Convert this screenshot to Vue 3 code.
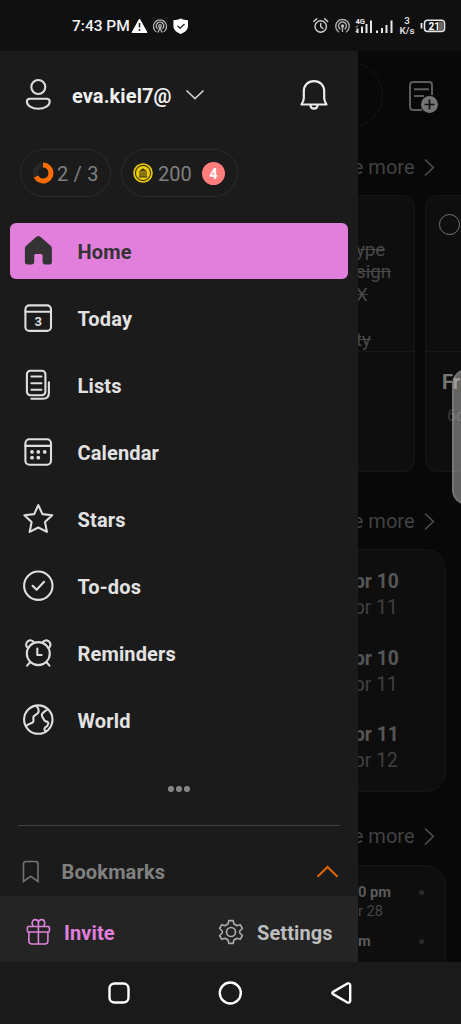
<script setup>
const items = [
  { id: 'home', label: 'Home' },
  { id: 'today', label: 'Today' },
  { id: 'lists', label: 'Lists' },
  { id: 'calendar', label: 'Calendar' },
  { id: 'stars', label: 'Stars' },
  { id: 'todos', label: 'To-dos' },
  { id: 'reminders', label: 'Reminders' },
  { id: 'world', label: 'World' },
]
const dates = [
  ['pr 10', 'pr 11'],
  ['pr 10', 'pr 11'],
  ['pr 11', 'pr 12'],
]
</script>

<template>
  <div class="screen">
    <header class="status">
      <span class="clock">7:43 PM</span>
      <svg class="st-left" width="60" height="18" viewBox="0 0 60 18">
        <path d="M8.500 2 L16 15.500 H1 Z" fill="#fff" stroke="#fff" stroke-linejoin="round" />
        <path d="M8.500 6v4.500M8.500 12v1.700" stroke="#222" stroke-width="1.600" />
        <g fill="none" stroke="#b5b5b5" stroke-width="1.300">
          <path d="M25.400 15a6.600 6.600 0 1 1 7.200 0M26.600 11.800a3.800 3.800 0 1 1 4.800 0M27 15.500l2-5 2 5" />
          <circle cx="29" cy="9" r="1.400" />
        </g>
        <path d="M49.700 1.500c2.300 1.300 4.700 1.700 7.300 1.700v5.500c0 4-3 6.500-7.300 8.300-4.300-1.800-7.300-4.300-7.300-8.300V3.200c2.600 0 5-.4 7.300-1.700Z" fill="#fff" />
        <path d="m46.500 8.800 2.600 2.500 4.400-4.400" fill="none" stroke="#333" stroke-width="1.400" />
      </svg>
      <svg class="st-right" width="92" height="18" viewBox="0 0 92 18">
        <g fill="none" stroke="#cfcfcf" stroke-width="1.400" stroke-linecap="round">
          <circle cx="7.700" cy="9.500" r="5.700" />
          <path d="M.8 4.400 3.800 1.800M11.600 1.800l3 2.600M7.700 6.500v3.200l2.200 1.800" />
          <path d="M25.500 14.800a6.800 6.800 0 1 1 8 0M27 11.900a3.900 3.900 0 1 1 5 0" stroke="#aaa" />
        </g>
        <circle cx="29.500" cy="9" r="1.700" fill="#bbb" />
        <path d="M29.500 10v5" stroke="#aaa" stroke-width="1.500" />
        <path d="M46 16v-4.500M50.500 16v-6.500M55 16V7M59.500 16V3.500M65.500 16v-2.500M70.500 16v-5M75 16V8M80 16V3.500" transform="translate(-1.500 0)" stroke="#e8e8e8" stroke-width="2" />
        <path d="M42.500 14.500h2M43 10.500l2-2" stroke="#ccc" />
        <text x="42.500" y="6.500" class="g4">4G</text>
      </svg>
      <span class="speed">3<br />K/s</span>
      <svg class="battery" width="26" height="14" viewBox="0 0 26 14">
        <path d="M1.500 4v5.500" stroke="#eee" stroke-width="1.800" />
        <rect x="4.500" y="1.200" width="20" height="11.200" rx="3" fill="none" stroke="#e6e6e6" stroke-width="1.600" />
        <rect x="19" y="2.500" width="4.500" height="8.600" fill="#666" />
        <text x="8.500" y="10.500" class="pct">21</text>
      </svg>
    </header>

    <main class="body">
      <aside class="drawer">
        <div class="account">
          <svg width="30" height="34" viewBox="0 0 30 34" fill="none" stroke="#dcdcdc" stroke-width="2.100">
            <circle cx="15.300" cy="9" r="7" />
            <path d="M7 20.800h16.600c2 0 3.100 1 3.100 2.700 0 4.200-4.800 7.200-11.400 7.200S3.900 27.700 3.900 23.500c0-1.700 1.100-2.700 3.100-2.700Z" />
          </svg>
          <strong>eva.kiel7@</strong>
          <svg class="chev" width="20" height="12" viewBox="0 0 20 12" fill="none" stroke="#d0d0d0" stroke-width="1.700"><path d="m1.500 1.500 8.500 8 8.500-8" /></svg>
          <svg class="bell" width="30" height="32" viewBox="0 0 30 32" fill="none" stroke="#ececec" stroke-width="2.200" stroke-linejoin="round">
            <path d="M15 2.200C8.800 2.200 4.800 6.500 4.800 12.300V19c0 2.500-1 4.500-2.300 6.500h25c-1.300-2-2.300-4-2.300-6.500v-6.700c0-5.800-4-10.100-10.200-10.100Z" />
            <path d="M11.500 26c0 2.400 1.300 3.600 3.500 3.600s3.500-1.200 3.500-3.600" />
          </svg>
        </div>

        <div class="pills">
          <div class="pill goal">
            <svg width="22" height="22" viewBox="0 0 22 22" fill="none" stroke-width="5">
              <circle cx="11" cy="11" r="7.900" stroke="#272727" />
              <path d="M11 3.100a7.900 7.900 0 1 1-7 11.500" stroke="#fb6d04" />
            </svg>
            <span>2 / 3</span>
          </div>
          <div class="pill coins">
            <svg width="20" height="20" viewBox="0 0 20 20">
              <circle cx="10" cy="10" r="9.800" fill="#edcc0a" />
              <circle cx="10" cy="10" r="7.600" fill="none" stroke="#443c10" stroke-width="1.200" />
              <path d="M5.800 8.300 10 5.300l4.200 3Z" fill="#443c10" />
              <path d="M7 8.500v5M9 8.500v5M11 8.500v5M13 8.500v5M5.700 14h8.600" stroke="#443c10" stroke-width="1.200" />
            </svg>
            <span>200</span>
            <b>4</b>
          </div>
        </div>

        <nav class="menu">
          <a v-for="item in items" :key="item.id" :class="{ active: item.id === 'home' }">
            <svg width="32" height="32" viewBox="0 0 32 32" fill="none" stroke="#dedede" stroke-width="2.100" stroke-linecap="round" stroke-linejoin="round">
              <path v-if="item.id === 'home'" d="M3.500 11.500 14 2.300q2-1.600 4 0l10.500 9.200q1 .9 1 2.400v13.600q0 2.500-2.500 2.500h-4.500q-2.300 0-2.300-2.300V21q0-1.500-1.500-1.500h-5.400q-1.500 0-1.500 1.500v6.700q0 2.300-2.300 2.300H5q-2.500 0-2.500-2.500V13.900q0-1.500 1-2.400Z" transform="translate(.4 -.6)" fill="#333" stroke="none" />
              <g v-else-if="item.id === 'today'" transform="translate(.4 .4)">
                <rect x="3" y="3" width="25.600" height="25.500" rx="4" />
                <path d="M3 9.300h25.600" />
                <text x="16" y="23.300" text-anchor="middle" class="day">3</text>
              </g>
              <g v-else-if="item.id === 'lists'" transform="translate(.4 .8)">
                <rect x="4.500" y="1" width="18.500" height="24.500" rx="3.500" />
                <path d="M9 6.700h10M9 13.400h10M9 20h10M9 29H20.500q6 0 6-6V12.500" />
              </g>
              <g v-else-if="item.id === 'calendar'" transform="translate(.4 0)">
                <rect x="3" y="3.300" width="25.600" height="25.500" rx="4" />
                <path d="M3 9.900h25.600" />
                <g fill="#dedede" stroke="none">
                  <circle cx="9.600" cy="15.900" r="1.900" /><circle cx="15.900" cy="15.900" r="1.900" /><circle cx="22.300" cy="15.900" r="1.900" />
                  <circle cx="9.600" cy="21.700" r="1.900" /><circle cx="15.900" cy="21.700" r="1.900" />
                </g>
              </g>
              <path v-else-if="item.id === 'stars'" transform="translate(.3 -.2)" d="m16 2.300 4.100 9 9.800 1.200-7.200 6.700 1.900 9.900-8.600-4.400-8.600 4.400 1.900-9.900-7.200-6.700 9.800-1.200Z" />
              <g v-else-if="item.id === 'todos'" transform="translate(.3 -.2)">
                <circle cx="16" cy="15.900" r="14.200" />
                <path d="m10.300 16 4 4 7.500-8" />
              </g>
              <g v-else-if="item.id === 'reminders'" transform="translate(.3 0)">
                <circle cx="16" cy="16.600" r="11.500" />
                <path d="M4.600 9.800a4.100 4.100 0 1 1 6.900-4.600M27.400 9.800a4.100 4.100 0 1 0-6.900-4.600M7.800 25.200l-3 3.400M24.200 25.200l3 3.400M15 11.500V18h4.300" />
              </g>
              <g v-else transform="translate(.3 0)">
                <circle cx="16" cy="15.600" r="14.200" />
                <path d="M14 2c2.700 2.500 2.900 5.100 1.500 7.200-1.500 2.100-4.300 1.800-4.500 4.200-.1 2 .8 2.900-.2 4.500-1.300 2.100-4.300 1.200-6.700 4M25 5.500c-2.400 2.100-5.500 3.300-5.500 5.600 0 2.600 2 2.900 2.400 5.100.2 1.500 2.600.8 3.900 2.200.9 1-.3 2.300-.8 3.300-.7 1.400-2.300 1.200-2.800 2.900-.3 1 .5 2 1 3" />
              </g>
            </svg>
            <span>{{ item.label }}</span>
          </a>
        </nav>

        <div class="dots"><i /><i /><i /></div>

        <div class="bookmarks">
          <svg width="18" height="24" viewBox="0 0 18 24" fill="none" stroke="#737373" stroke-width="1.600"><path d="M1.500 21.500V4q0-2.500 2.500-2.500h9.500Q16 1.500 16 4v17.500l-7.200-5.200Z" /></svg>
          <strong>Bookmarks</strong>
          <svg class="up" width="24" height="14" viewBox="0 0 24 14" fill="none" stroke="#dc6507" stroke-width="2"><path d="M2.500 11.800 12.500 2l10 9.800" /></svg>
        </div>

        <div class="actions">
          <svg class="gift" width="26" height="28" viewBox="0 0 26 28" fill="none" stroke="#dd82db" stroke-width="1.600" stroke-linejoin="round">
            <rect x="2.400" y="8.500" width="22" height="5.500" rx="1" />
            <path d="M3.900 14v9q0 3 3 3h13q3 0 3-3v-9M13.400 8.500V26M13.400 8.500V5.200C13.400 3 12.100 1.600 10.300 1.600S7.100 3 7.100 5.200q0 2 1.300 3.300M13.400 5.200c0-2.200 1.300-3.600 3.100-3.600s3.200 1.400 3.200 3.600q0 2-1.300 3.300" />
          </svg>
          <strong class="invite">Invite</strong>
          <svg class="gear" width="28" height="28" viewBox="0 0 28 28" fill="none" stroke="#ababab" stroke-width="1.700" stroke-linejoin="round">
            <circle cx="14" cy="14" r="4.500" />
            <path transform="translate(.7 .7) scale(.95)" d="M11.700 2h4.600l.8 3.600q1.700.8 3.100 1.800l3.500-1.100 2.300 4-2.600 2.400q-.5 1.300 0 2.600l2.600 2.400-2.300 4-3.500-1.100q-1.400 1-3.100 1.800l-.8 3.600h-4.600l-.8-3.600q-1.700-.8-3.100-1.800l-3.500 1.100-2.300-4 2.600-2.400q.5-1.300 0-2.600L2 10.300l2.300-4 3.500 1.100q1.400-1 3.100-1.800Z" />
          </svg>
          <strong class="settings">Settings</strong>
        </div>
      </aside>

      <section class="page">
        <div class="top">
          <i class="avatar" />
          <svg width="32" height="34" viewBox="0 0 32 34" fill="none" stroke="#5c5c5c" stroke-width="2">
            <path d="M25 15V5q0-3-3-3H6Q3 2 3 5v22q0 3 3 3h9M7 9.300h15M7 16h10" />
            <circle cx="22.500" cy="24.500" r="8.500" fill="#757575" stroke="none" />
            <path d="M22.500 19.500v10M17.500 24.500h10" stroke="#111" stroke-width="1.700" />
          </svg>
        </div>
        <div class="more m1"><span>e more</span><svg width="11" height="19" viewBox="0 0 11 19"><path d="m1 1.500 8.300 8L1 17.500" /></svg></div>
        <div class="cards">
          <div class="card notes">
            <div class="lines"><s>ype</s><s>sign</s><s>X</s><s class="gap">ty</s></div>
          </div>
          <div class="card next">
            <div class="check"><i /></div>
            <strong>Fr</strong>
            <small>6d</small>
          </div>
        </div>
        <div class="more m2"><span>e more</span><svg width="11" height="19" viewBox="0 0 11 19"><path d="m1 1.500 8.300 8L1 17.500" /></svg></div>
        <div class="panel list">
          <div v-for="(d, i) in dates" :key="i" class="date"><b>{{ d[0] }}</b><span>{{ d[1] }}</span></div>
        </div>
        <div class="more m3"><span>e more</span><svg width="11" height="19" viewBox="0 0 11 19"><path d="m1 1.500 8.300 8L1 17.500" /></svg></div>
        <div class="panel events">
          <div class="ev"><b>0 pm</b><i /></div>
          <span>r 28</span>
          <div class="ev"><b>m</b><i /></div>
        </div>
        <div class="handle" />
      </section>
    </main>

    <footer class="sysnav">
      <svg width="24" height="24" viewBox="0 0 24 24"><rect x="2.500" y="2.500" width="19" height="19" rx="5" /></svg>
      <svg width="26" height="26" viewBox="0 0 26 26"><circle cx="13.300" cy="13" r="10.500" /></svg>
      <svg width="24" height="26" viewBox="0 0 24 26"><path d="M4.500 11.600 18 3.700q2.800-1.200 3.200 1.500v15.600q-.4 2.700-3.200 1.500L4.500 14.400q-2.500-1.400 0-2.800Z" /></svg>
    </footer>
  </div>
</template>

<style>
body { margin: 0; background: #080808; }
</style>

<style scoped>
* { box-sizing: border-box; }
.screen { width: 461px; height: 1024px; display: flex; flex-direction: column; overflow: hidden; background: #080808; font-family: Roboto, "Liberation Sans", sans-serif; }
svg { display: block; flex: none; }
i { display: block; }
span, strong, b, small, s { white-space: nowrap; }

.status { height: 51px; flex: none; display: flex; align-items: center; background: #101010; color: #f2f2f2; padding-left: 72px; }
.clock { font-size: 15.500px; font-weight: 500; line-height: 20px; width: 59px; }
.st-right { margin-left: 122px; }
.speed { width: 20px; margin-left: -8px; padding-top: 1px; font-size: 9.800px; line-height: 10px; text-align: center; font-weight: 600; color: #ddd; }
.battery { margin-left: 3px; }
.g4 { font: 700 7.500px Roboto, sans-serif; fill: #eee; }
.pct { font: 700 10px Roboto, sans-serif; fill: #fff; }

.body { height: 911px; flex: none; display: flex; }
.drawer { width: 358px; flex: none; background: #1b1b1b; display: flex; flex-direction: column; }
.account { height: 98px; flex: none; padding: 0 29px 10px 23px; display: flex; align-items: center; color: #f0f0f0; }
.account strong { margin-left: 19px; width: 100px; padding-top: 1px; font-size: 20px; font-weight: 700; line-height: 24px; letter-spacing: .1px; }
.chev { margin-left: 13px; }
.bell { margin-left: auto; }

.pills { height: 74px; flex: none; display: flex; align-items: flex-start; gap: 10px; padding-left: 20px; }
.pill { height: 48px; border: 1.500px solid #2b2b2b; border-radius: 24px; display: flex; align-items: center; color: #7f7f7f; font-size: 20px; line-height: 24px; }
.pill span { padding-top: 2px; }
.goal { width: 91px; padding-left: 11px; }
.goal span { margin-left: 3px; letter-spacing: .2px; }
.coins { width: 117px; padding-left: 11px; }
.coins span { margin-left: 5px; width: 35px; }
.coins b { width: 23px; height: 23px; margin-left: 9px; border-radius: 50%; background: #ff7d7d; color: #fff; font-size: 14px; line-height: 25px; text-align: center; }

.menu { display: flex; flex-direction: column; gap: 11px; padding: 0 10px; }
.menu a { height: 56px; border-radius: 6px; display: flex; align-items: center; padding-left: 12px; color: #e2e2e2; font-size: 20px; font-weight: 700; line-height: 24px; letter-spacing: .15px; }
.menu span { margin-left: 23.500px; padding-top: 2px; }
.menu .active { background: #e27fdd; color: #333; }
.day { font: 700 13px Roboto, sans-serif; fill: #dedede; stroke: none; }

.dots { height: 78px; flex: none; display: flex; gap: 2.300px; justify-content: center; align-items: center; border-bottom: 1.500px solid #404040; margin: 0 18px; padding-top: 5px; }
.dots i { width: 5.500px; height: 5.500px; border-radius: 50%; background: #858585; }
.bookmarks { flex: 1; display: flex; align-items: center; padding: 21px 19px 0 22px; color: #818181; font-size: 20px; line-height: 24px; letter-spacing: .15px; }
.bookmarks strong { margin-left: 21.500px; }
.up { margin-left: auto; }
.actions { height: 66px; flex: none; background: #242424; display: flex; align-items: center; padding: 6px 0 0 25px; font-size: 20px; line-height: 24px; letter-spacing: .1px; }
.actions strong { padding-top: 2px; }
.invite { margin-left: 13px; width: 52px; color: #e07fdc; }
.gear { margin-left: 101px; }
.settings { margin-left: 12px; color: #bdbdbd; }

.page { position: relative; flex: 1; min-width: 0; overflow: hidden; background: #080808; display: flex; flex-direction: column; color: #454545; }
.top { height: 88px; flex: none; display: flex; align-items: center; }
.avatar { width: 66px; height: 66px; flex: none; margin-left: -41px; border: 1px solid #151515; border-radius: 50%; }
.top svg { margin: 4px 0 0 24px; }
.more { flex: none; height: 24px; display: flex; align-items: center; color: #424242; font-size: 20px; line-height: 24px; }
.more span { width: 56.500px; display: flex; justify-content: flex-end; }
.more svg { margin-left: 9px; fill: none; stroke: #4c4c4c; stroke-width: 1.700; }
.m1 { margin-top: 16px; }
.m2 { margin-top: 37px; }
.m3 { margin-top: 32px; }
.cards { display: flex; flex: none; gap: 10px; height: 277px; margin-top: 16px; }
.card { background: #0e0e0e; border: 1px solid #161616; flex: none; overflow: hidden; }
.notes { width: 57px; border-left: 0; border-radius: 0 12px 12px 0; }
.lines { height: 156px; padding-top: 43px; border-bottom: 1px solid #171717; display: flex; flex-direction: column; font-size: 18.700px; line-height: 22.400px; color: #484848; }
.lines s { margin-left: -2px; }
.lines .gap { margin-top: 22.400px; }
.next { width: 70px; border-radius: 12px; }
.check { height: 156px; border-bottom: 1px solid #171717; padding: 18px 0 0 13px; }
.check i { width: 21px; height: 21px; border: 1.800px solid #777; border-radius: 50%; }
.next strong { display: block; margin: 18px 0 0 16px; font-size: 20px; line-height: 24px; color: #777; }
.next small { display: block; margin: 12px 0 0 21px; font-size: 16px; line-height: 20px; color: #393939; }
.panel { flex: none; width: 88px; background: #0e0e0e; border: 1px solid #151515; border-left: 0; }
.list { height: 243px; margin-top: 16px; border-radius: 0 20px 20px 0; padding-top: 19px; }
.date { height: 76.700px; margin-left: -4px; display: flex; flex-direction: column; font-size: 19.300px; line-height: 26px; color: #404040; }
.date b { color: #565656; }
.events { height: 100px; margin-top: 17px; border-radius: 0 20px 0 0; padding-top: 16px; font-size: 14.700px; line-height: 20px; }
.ev { display: flex; align-items: center; width: 66px; justify-content: space-between; }
.ev b { color: #5a5a5a; }
.ev i { width: 5px; height: 5px; border-radius: 50%; background: #292929; }
.events > span { display: block; height: 29px; line-height: 18px; margin-left: 0; }
.handle { position: absolute; left: 94px; top: 318px; width: 30px; height: 136px; border-radius: 15px; background: rgba(200, 200, 200, .46); border: 2px solid rgba(160, 160, 160, .3); }

.sysnav { flex: 1; display: flex; align-items: center; background: #1a1a1a; padding-left: 107px; }
.sysnav svg { fill: none; stroke: #fff; stroke-width: 2.400; }
.sysnav svg + svg { margin-left: 86px; }
</style>
